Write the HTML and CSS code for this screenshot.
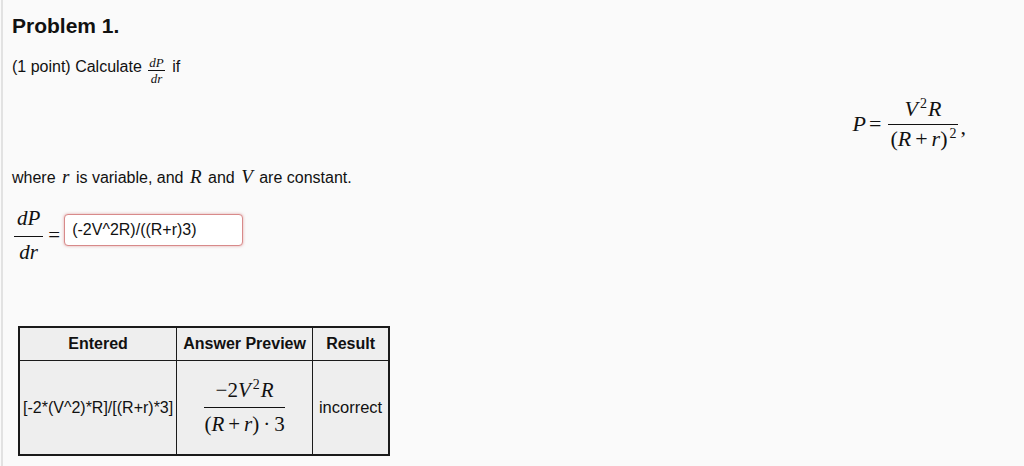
FILE: index.html
```html
<!DOCTYPE html>
<html>
<head>
<meta charset="utf-8">
<link rel="stylesheet" href="styles.css">
</head>
<body>
<div class="page">
  <h1 class="title">Problem 1.</h1>
  <p class="intro">(1 point) Calculate <span class="frac small"><span class="num m">dP</span><span class="den m">dr</span></span> if</p>
  <div class="display">
    <span class="m">P</span><span class="op">=</span><span class="frac big"><span class="num"><span class="m">V</span><sup>2</sup><span class="m">R</span></span><span class="den">(<span class="m">R</span><span class="op2">+</span><span class="m">r</span>)<sup>2</sup></span></span><span class="comma">,</span>
  </div>
  <p class="where">where <span class="mi">r</span> is variable, and <span class="mi">R</span> and <span class="mi">V</span> are constant.</p>
  <div class="answer">
    <span class="frac ans"><span class="num m">dP</span><span class="den m">dr</span></span><span class="eq">=</span><div class="input">(-2V^2R)/((R+r)3)</div>
  </div>
  <table class="results">
    <tr><th class="c1">Entered</th><th class="c2">Answer Preview</th><th class="c3">Result</th></tr>
    <tr>
      <td class="c1">[-2*(V^2)*R]/[(R+r)*3]</td>
      <td class="c2"><span class="frac pv"><span class="num">&minus;2<span class="m">V</span><sup>2</sup><span class="m">R</span></span><span class="den">(<span class="m">R</span><span class="op2">+</span><span class="m">r</span>)<span class="dot">&middot;</span>3</span></span></td>
      <td class="c3">incorrect</td>
    </tr>
  </table>
</div>
</body>
</html>
```
FILE: styles.css
```css
html, body { margin: 0; padding: 0; background: #fafafa; }
body { padding-left: 1px; height: 466px; overflow: hidden; }
.page {
  border-left: 2px solid #e2e2e2;
  padding: 13px 0 0 9px;
  height: 453px;
  font-family: "Liberation Sans", Arial, sans-serif;
  font-size: 16px;
  color: #111;
}
.title { font-size: 21px; font-weight: bold; margin: 0; line-height: 25px; }
.intro { margin: 18px 0 0; line-height: 22px; }
.m, .mi { font-family: "Liberation Serif", "Times New Roman", serif; font-style: italic; }
.mi { font-size: 19px; margin: 0 2px; }
.frac { display: inline-flex; flex-direction: column; align-items: stretch; text-align: center; vertical-align: middle; }
.frac .num { border-bottom: 1px solid #111; padding: 0 1px; line-height: 1; }
.frac .den { line-height: 1; padding-top: 1px; }
.frac.small { font-size: 13px; vertical-align: 5px; margin: 0 3px 0 2px; }
.frac.small .num { padding-bottom: 1px; }
.display {
  display: flex; justify-content: flex-end; align-items: center;
  padding-right: 58px; margin-top: 13px;
  font-family: "Liberation Serif", "Times New Roman", serif; font-size: 22px;
}
.display .op { margin: 0 7px 0 3px; }
.frac.big .num { padding: 0 2px 4px; border-bottom: 1px solid #111; }
.frac.big .den { padding-top: 3px; padding-left: 2px; }
.frac sup { font-size: 14px; vertical-align: 8px; line-height: 0; margin-left: 2px; margin-right: 1px; }
.op2 { margin: 0 4px; font-style: normal; }
.comma { margin-left: 3px; margin-top: 6px; }
.where { margin: 16px 0 0; line-height: 22px; }
.answer { display: flex; align-items: center; margin-top: 19px; }
.frac.ans { font-size: 21px; margin-left: 2px; }
.frac.ans .num { padding: 0 3px 7px; }
.frac.ans .den { padding-top: 5px; }
.eq { font-family: "Liberation Serif", serif; font-size: 21px; margin: 0 4px 0 5px; }
.input {
  width: 179px; height: 32px; box-sizing: border-box;
  border: 1px solid #d88a8a; border-radius: 4px;
  box-shadow: 0 0 3px rgba(200, 80, 80, 0.5);
  background: #fff; padding: 6px 0 0 7px; line-height: 18px;
  margin-top: -12px;
}
.results {
  border-collapse: collapse; margin: 63px 0 0 6px;
  border: 2px solid #1a1a1a; background: #eeeeee;
}
.results th, .results td { border: 1px solid #1a1a1a; text-align: center; }
.results .c1 { padding: 0 3px; }
.results .c2 { padding: 0 6px; }
.results .c3 { padding: 0 6px; }
.results th { height: 32px; font-weight: bold; font-size: 16px; }
.results td { height: 93px; font-size: 16.5px; }
.results td.c1 { font-size: 16px; }
.frac.pv { font-family: "Liberation Serif", serif; font-size: 21px; }
.frac.pv .num { padding: 0 4px 6px; }
.frac.pv .den { padding-top: 6px; }
.dot { margin: 0 4px; }
```
